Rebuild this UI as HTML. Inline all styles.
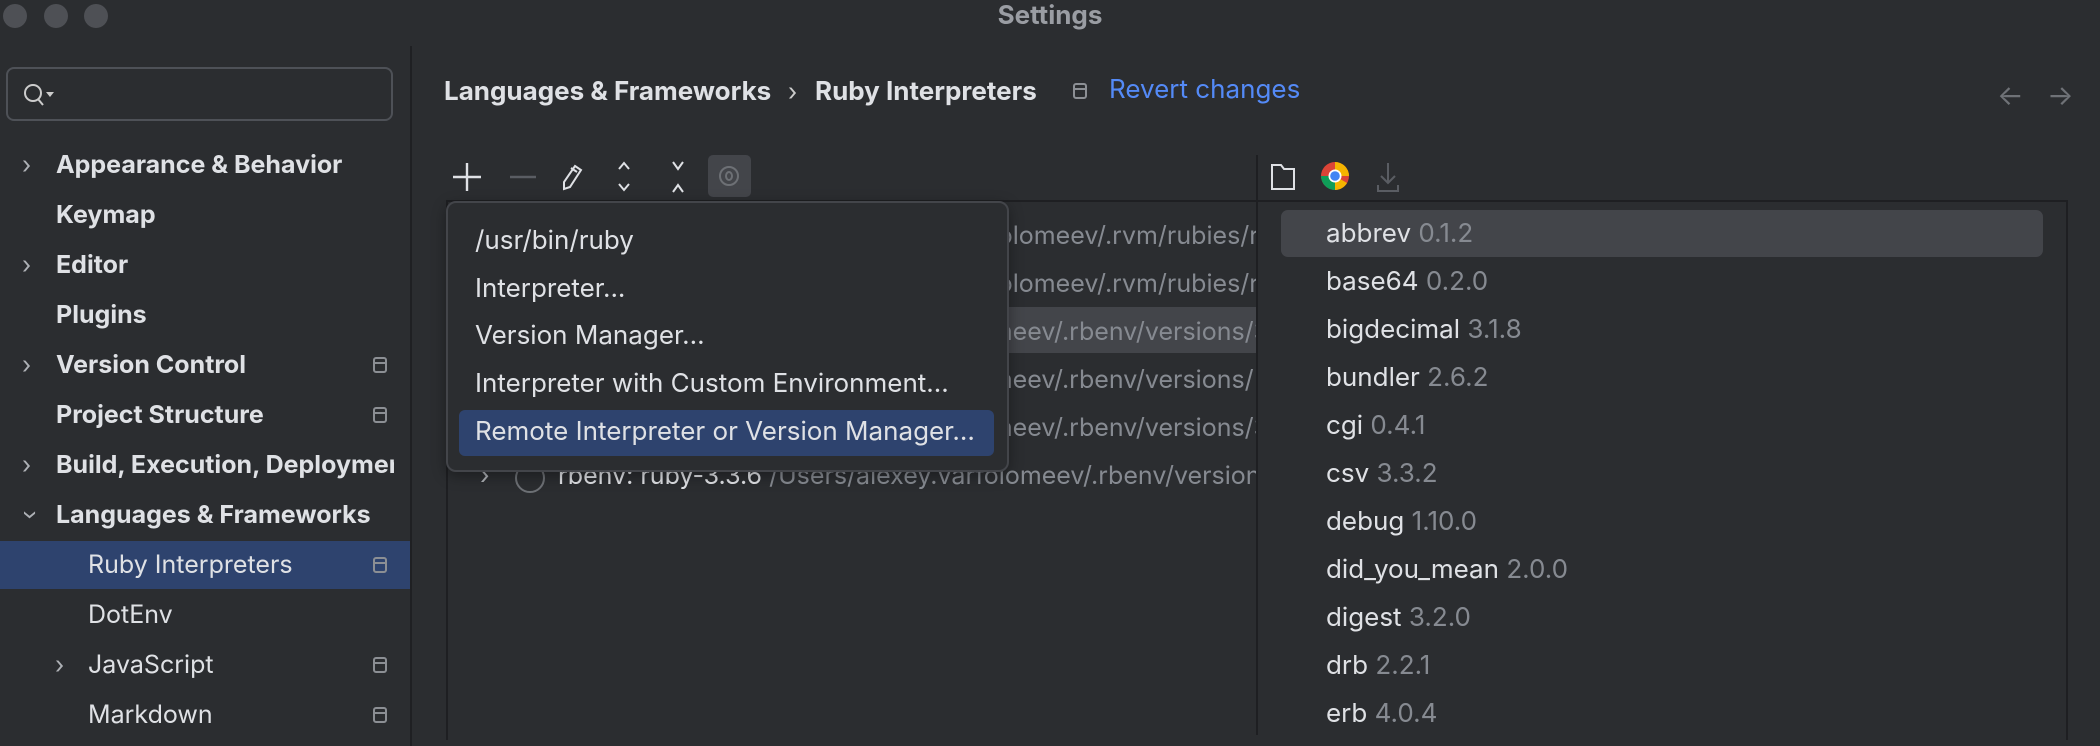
<!DOCTYPE html>
<html><head><meta charset="utf-8"><style>
*{margin:0;padding:0;box-sizing:border-box}
body{width:2100px;height:732px;background:#2b2d30;overflow:hidden;position:relative;font-family:"Inter","Liberation Sans",sans-serif;color:#dfe1e5}
.a{position:absolute;white-space:nowrap}
.dot{position:absolute;top:4px;width:24px;height:24px;border-radius:50%;background:#4e5055}
.side{font-size:25px;line-height:50px;height:50px;left:0;width:411px}
.b{font-weight:bold}
.chev{position:absolute;left:22px;top:0;color:#aeb1b6;font-size:24px}
.ic{position:absolute;width:14px;height:16px;border:2px solid #8c8f94;border-radius:3px}
.ic:after{content:"";position:absolute;left:0;right:0;top:3px;border-top:2px solid #8c8f94}
.row{font-size:25px;line-height:48px;height:48px}
.g{color:#868a91}
.mi{font-size:26px;position:absolute;left:475px;line-height:46px}
</style></head><body>
<div class="dot" style="left:3px"></div><div class="dot" style="left:44px"></div><div class="dot" style="left:84px"></div>
<div class="a b" style="left:0;width:2100px;text-align:center;top:0;line-height:32px;font-size:26px;color:#9a9da3">Settings</div>

<div class="a" style="left:410px;top:46px;width:2px;height:700px;background:#1f2023"></div>
<div class="a" style="left:6px;top:67px;width:387px;height:54px;border:2px solid #4e5157;border-radius:8px"></div>
<svg class="a" style="left:22px;top:82px" width="36" height="26"><circle cx="11" cy="11" r="8" fill="none" stroke="#ccc" stroke-width="2"/><line x1="16" y1="17" x2="21" y2="23" stroke="#ccc" stroke-width="2"/><path d="M24 10h8l-4 5z" fill="#ccc"/></svg>

<div class="a" style="left:0;top:541px;width:410px;height:48px;background:#2e436e"></div>
<div class="a side" style="top:140px"><span class="chev">›</span><span class="b" style="margin-left:56px">Appearance &amp; Behavior</span></div>
<div class="a side" style="top:190px"><span class="b" style="margin-left:56px">Keymap</span></div>
<div class="a side" style="top:240px"><span class="chev">›</span><span class="b" style="margin-left:56px">Editor</span></div>
<div class="a side" style="top:290px"><span class="b" style="margin-left:56px">Plugins</span></div>
<div class="a side" style="top:340px"><span class="chev">›</span><span class="b" style="margin-left:56px">Version Control</span><i class="ic" style="left:373px;top:17px"></i></div>
<div class="a side" style="top:390px"><span class="b" style="margin-left:56px">Project Structure</span><i class="ic" style="left:373px;top:17px"></i></div>
<div class="a side" style="top:440px;overflow:hidden;width:394px"><span class="chev">›</span><span class="b" style="margin-left:56px">Build, Execution, Deployment</span></div>
<div class="a side" style="top:490px"><span class="chev" style="transform:rotate(90deg);left:26px">›</span><span class="b" style="margin-left:56px">Languages &amp; Frameworks</span></div>
<div class="a side" style="top:540px"><span style="margin-left:88px">Ruby Interpreters</span><i class="ic" style="left:373px;top:17px"></i></div>
<div class="a side" style="top:590px"><span style="margin-left:88px">DotEnv</span></div>
<div class="a side" style="top:640px"><span class="chev" style="left:55px">›</span><span style="margin-left:88px">JavaScript</span><i class="ic" style="left:373px;top:17px"></i></div>
<div class="a side" style="top:690px"><span style="margin-left:88px">Markdown</span><i class="ic" style="left:373px;top:17px"></i></div>

<div class="a b" style="left:444px;top:76px;font-size:26px;line-height:32px">Languages &amp; Frameworks</div>
<div class="a" style="left:788px;top:76px;font-size:24px;line-height:32px;color:#ccc">›</div>
<div class="a b" style="left:815px;top:76px;font-size:26px;line-height:32px">Ruby Interpreters</div>
<i class="ic" style="left:1073px;top:83px"></i>
<div class="a" style="left:1109px;top:74px;font-size:26px;line-height:32px;color:#548af7">Revert changes</div>
<div class="a" style="left:1997px;top:78px;font-size:28px;color:#6f7277">←</div>
<div class="a" style="left:2047px;top:78px;font-size:28px;color:#6f7277">→</div>

<svg class="a" style="left:450px;top:155px" width="310" height="44">
<path d="M17 8v28M3 22h28" stroke="#dfe1e5" stroke-width="2.4" fill="none"/>
<path d="M60 22h26" stroke="#5a5d63" stroke-width="2.4"/>
<path d="M125 11l6 4-11 17-6 2 0-7z M121 13l6 4" stroke="#dfe1e5" stroke-width="2" fill="none"/>
<path d="M169 14l5-6 5 6M169 29l5 6 5-6" stroke="#dfe1e5" stroke-width="2" fill="none"/>
<path d="M223 7l5 7 5-7M223 37l5-7 5 7" stroke="#dfe1e5" stroke-width="2" fill="none"/>
<rect x="258" y="0" width="43" height="42" rx="5" fill="#43454a"/>
<ellipse cx="279" cy="21" rx="9" ry="9" stroke="#6d7075" stroke-width="2" fill="none"/><ellipse cx="279" cy="21" rx="3" ry="4" stroke="#6d7075" stroke-width="2" fill="none"/>
</svg>

<div class="a" style="left:446px;top:200px;width:1622px;height:540px;border:2px solid #1e1f22;border-bottom:none"></div>
<div class="a" style="left:1256px;top:155px;width:2px;height:580px;background:#1e1f22"></div>
<div class="a" style="left:448px;top:307px;width:808px;height:46px;background:#43454a"></div>
<div class="a" style="left:448px;top:202px;width:808px;height:530px;overflow:hidden">
 <div class="a row g" style="left:335px;top:10px">/Users/alexey.varfolomeev/.rvm/rubies/ruby-3.4.1/bin/ruby</div>
 <div class="a row g" style="left:335px;top:58px">/Users/alexey.varfolomeev/.rvm/rubies/ruby-3.3.0/bin/ruby</div>
 <div class="a row g" style="left:292px;top:106px">/Users/alexey.varfolomeev/.rbenv/versions/3.4.1/bin/ruby</div>
 <div class="a row g" style="left:292px;top:154px">/Users/alexey.varfolomeev/.rbenv/versions/</div>
 <div class="a row g" style="left:292px;top:202px">/Users/alexey.varfolomeev/.rbenv/versions/3</div>
 <div class="a row" style="left:32px;top:250px"><span style="color:#aeb1b6">›</span></div>
 <div class="a" style="left:67px;top:261px;width:30px;height:30px;border:2px solid #6d7075;border-radius:50%"></div>
 <div class="a row" style="left:110px;top:250px">rbenv: ruby-3.3.6 <span class="g">/Users/alexey.varfolomeev/.rbenv/versions/3.3.6</span></div>
</div>

<div class="a" style="left:446px;top:201px;width:563px;height:271px;background:#2b2d30;border:2px solid #43454a;border-radius:10px;box-shadow:0 4px 14px rgba(0,0,0,.35)"></div>
<div class="a" style="left:459px;top:410px;width:535px;height:46px;background:#2e436e;border-radius:6px"></div>
<div class="mi" style="top:218px">/usr/bin/ruby</div>
<div class="mi" style="top:266px">Interpreter...</div>
<div class="mi" style="top:313px">Version Manager...</div>
<div class="mi" style="top:361px">Interpreter with Custom Environment...</div>
<div class="mi" style="top:409px">Remote Interpreter or Version Manager...</div>

<svg class="a" style="left:1268px;top:160px" width="140" height="34">
<path d="M4 5h9l3 4h10v20H4z" stroke="#dfe1e5" stroke-width="2" fill="none"/>
<circle cx="67" cy="16" r="14" fill="#db4437"/>
<path d="M67 16L55 23A14 14 0 0 0 67 30z" fill="#0f9d58"/>
<path d="M67 16L79 23A14 14 0 0 1 67 30z M67 16v-14A14 14 0 0 1 81 16z" fill="#f4b400"/>
<path d="M67 16L53 16A14 14 0 0 0 60 28z" fill="#0f9d58"/>
<circle cx="67" cy="16" r="6.5" fill="#fff"/><circle cx="67" cy="16" r="4.8" fill="#4285f4"/>
<path d="M120 3v20M113 16l7 7 7-7M110 25v6h20v-6" stroke="#5a5d63" stroke-width="2" fill="none"/>
</svg>

<div class="a" style="left:1281px;top:210px;width:762px;height:47px;background:#43454a;border-radius:7px"></div>
<div class="a" style="left:1326px;top:210px;font-size:26px;line-height:48px">
<div>abbrev <span class="g">0.1.2</span></div>
<div>base64 <span class="g">0.2.0</span></div>
<div>bigdecimal <span class="g">3.1.8</span></div>
<div>bundler <span class="g">2.6.2</span></div>
<div>cgi <span class="g">0.4.1</span></div>
<div>csv <span class="g">3.3.2</span></div>
<div>debug <span class="g">1.10.0</span></div>
<div>did_you_mean <span class="g">2.0.0</span></div>
<div>digest <span class="g">3.2.0</span></div>
<div>drb <span class="g">2.2.1</span></div>
<div>erb <span class="g">4.0.4</span></div>
</div>
</body></html>
